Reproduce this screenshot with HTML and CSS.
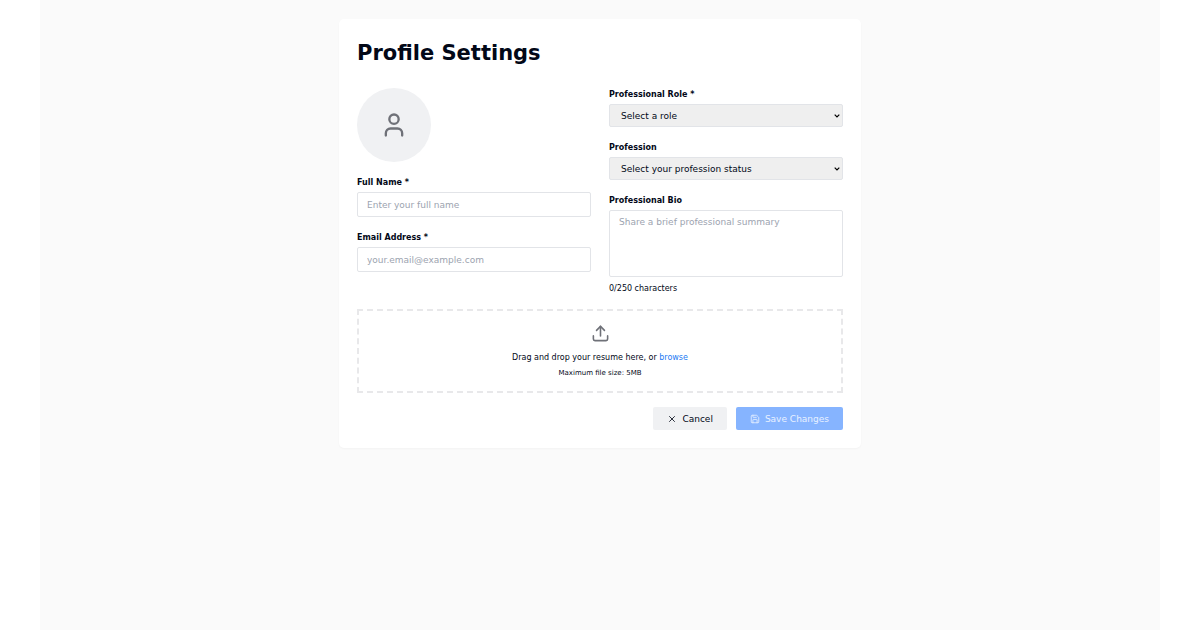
FILE: index.html
```
<!DOCTYPE html>
<html lang="en">
<head>
    <meta charset="UTF-8">
    <meta name="viewport" content="width=device-width, initial-scale=1.0">
    <title>Profile Settings</title>
    <link rel="stylesheet" href="styles.css">
</head>
<body>

    <main class="page">
        <form class="card">
            <h1>Profile Settings</h1>

            <div class="columns">
                <div class="column">
                    <div class="avatar">
                        <svg class="icon" viewBox="0 0 24 24" aria-hidden="true">
                            <path d="M19 21v-2a4 4 0 0 0-4-4H9a4 4 0 0 0-4 4v2"/>
                            <circle cx="12" cy="7" r="4"/>
                        </svg>
                    </div>
                    <div class="field">
                        <label for="fullName">Full Name *</label>
                        <input type="text" id="fullName" placeholder="Enter your full name">
                    </div>
                    <div class="field">
                        <label for="email">Email Address *</label>
                        <input type="email" id="email" placeholder="your.email@example.com">
                    </div>
                </div>

                <div class="column">
                    <div class="field">
                        <label for="role">Professional Role *</label>
                        <select id="role">
                            <option value="">Select a role</option>
                        </select>
                    </div>
                    <div class="field">
                        <label for="profession">Profession</label>
                        <select id="profession">
                            <option value="">Select your profession status</option>
                        </select>
                    </div>
                    <div class="field">
                        <label for="bio">Professional Bio</label>
                        <textarea id="bio" maxlength="250" placeholder="Share a brief professional summary"></textarea>
                        <p class="count">0/250 characters</p>
                    </div>
                </div>
            </div>

            <div class="dropzone">
                <svg class="icon" viewBox="0 0 24 24" aria-hidden="true">
                    <path d="M21 15v4a2 2 0 0 1-2 2H5a2 2 0 0 1-2-2v-4"/>
                    <polyline points="17 8 12 3 7 8"/>
                    <line x1="12" y1="3" x2="12" y2="15"/>
                </svg>
                <p>Drag and drop your resume here, or <a href="#">browse</a></p>
                <p class="hint">Maximum file size: 5MB</p>
            </div>

            <div class="actions">
                <button type="button" class="button">
                    <svg class="icon" viewBox="0 0 24 24" aria-hidden="true">
                        <path d="M18 6 6 18M6 6l12 12"/>
                    </svg>
                    Cancel
                </button>
                <button type="submit" class="button primary" disabled>
                    <svg class="icon" viewBox="0 0 24 24" aria-hidden="true">
                        <path d="M15.2 3a2 2 0 0 1 1.4.6l3.8 3.8a2 2 0 0 1 .6 1.4V19a2 2 0 0 1-2 2H5a2 2 0 0 1-2-2V5a2 2 0 0 1 2-2z"/>
                        <path d="M17 21v-7a1 1 0 0 0-1-1H8a1 1 0 0 0-1 1v7M7 3v4a1 1 0 0 0 1 1h7"/>
                    </svg>
                    Save Changes
                </button>
            </div>
        </form>
    </main>

</body>
</html>
```
FILE: styles.css
```
* {
    box-sizing: border-box;
}

body {
    font-family: "DejaVu Sans", sans-serif;
    font-size: 9px;
    color: #020817;
    background-color: white;
    margin: 0;
}

.page {
    max-width: 1120px;
    min-height: 100vh;
    margin: 0 auto;
    padding: 19px;
    background-color: #fafafa;
}

.card {
    max-width: 522px;
    margin: 0 auto;
    padding: 18px;
    background-color: white;
    border-radius: 5px;
    box-shadow: 0 1px 2px rgba(0, 0, 0, 0.03);
}

h1 {
    font-size: 21px;
    line-height: 32px;
    margin: 0 0 19px;
}

p {
    margin: 0;
}

.icon {
    fill: none;
    stroke: currentColor;
    stroke-width: 2;
    stroke-linecap: round;
    stroke-linejoin: round;
}

.columns {
    display: grid;
    grid-template-columns: 1fr 1fr;
    gap: 18px;
}

.column {
    display: flex;
    flex-direction: column;
    gap: 14px;
}

.avatar {
    display: flex;
    align-items: center;
    justify-content: center;
    width: 74px;
    height: 74px;
    border-radius: 50%;
    background-color: #f0f1f3;
    color: #6f7178;
}

.avatar .icon {
    width: 28px;
    height: 28px;
}

.field {
    display: flex;
    flex-direction: column;
}

label {
    font-size: 8px;
    font-weight: bold;
    line-height: 13px;
    margin-bottom: 3px;
}

input, select, textarea {
    width: 100%;
    font: inherit;
    color: inherit;
    border: 1px solid #e2e4e8;
    border-radius: 2px;
}

input {
    height: 25px;
    padding: 0 9px;
}

select {
    height: 23px;
    padding: 0 11px;
    appearance: none;
    background: #efefef url("data:image/svg+xml,%3Csvg xmlns='http://www.w3.org/2000/svg' viewBox='0 0 6 4'%3E%3Cpath d='M.7.7 3 3 5.3.7' fill='none' stroke='%23000' stroke-width='1.2'/%3E%3C/svg%3E") no-repeat right 2px center / 6px 4px;
}

textarea {
    display: block;
    height: 67px;
    padding: 4px 9px;
    line-height: 14px;
    resize: none;
}

input::placeholder, textarea::placeholder {
    color: #9ca3af;
}

.count {
    font-size: 8px;
    line-height: 13px;
    margin-top: 5px;
}

.dropzone {
    display: flex;
    flex-direction: column;
    align-items: center;
    margin: 14px 0;
    padding: 13px 13px 12px;
    border: 2px dashed #e8e8ea;
    font-size: 8px;
    line-height: 12px;
}

.dropzone .icon {
    width: 19px;
    height: 19px;
    margin-bottom: 9px;
    color: #6f7178;
}

.dropzone a {
    color: #1d7af3;
    text-decoration: none;
}

.dropzone .hint {
    font-size: 7px;
    margin-top: 3px;
}

.actions {
    display: flex;
    justify-content: flex-end;
    gap: 9px;
}

.button {
    display: flex;
    align-items: center;
    gap: 5px;
    height: 23px;
    padding: 0 14px;
    font: inherit;
    color: inherit;
    background-color: #f0f1f3;
    border: none;
    border-radius: 2px;
    cursor: pointer;
}

.button .icon {
    width: 10px;
    height: 10px;
}

.primary {
    color: #e8f1ff;
    background-color: #86b4ff;
    cursor: not-allowed;
}
```
